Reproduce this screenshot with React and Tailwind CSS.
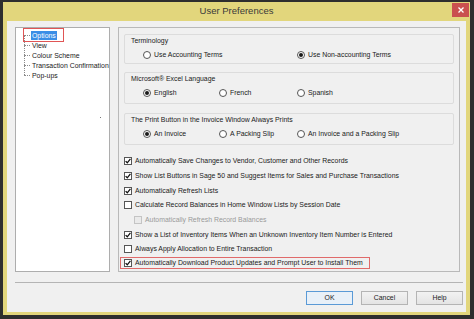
import React from 'react';

const font = { fontFamily: '"Liberation Sans", Arial, sans-serif' };

function Radio({ checked, label, className = '' }) {
  return (
    <div className={'flex items-center gap-[3px] whitespace-nowrap ' + className}>
      <span className="w-[8px] h-[8px] rounded-full border border-[#555] bg-white flex items-center justify-center">
        {checked && <span className="w-[4px] h-[4px] rounded-full bg-[#1a1a1a]" />}
      </span>
      <span>{label}</span>
    </div>
  );
}

function Check({ checked, label, disabled }) {
  return (
    <div className={'flex items-center gap-[3px] h-[14.7px] whitespace-nowrap ' + (disabled ? 'text-[#9a9a9a] pl-[10px]' : 'text-[#1a1a1a]')}>
      <span
        className={
          'w-[8px] h-[8px] border flex items-center justify-center ' +
          (disabled ? 'border-[#c4c4c4] bg-[#eaeaea]' : 'border-[#555] bg-white')
        }
      >
        {checked && (
          <svg width="6" height="6" viewBox="0 0 6 6">
            <path d="M0.6 3.1 L2.3 4.8 L5.4 0.9" fill="none" stroke="#111" strokeWidth="1.3" />
          </svg>
        )}
      </span>
      <span>{label}</span>
    </div>
  );
}

function Group({ title, className = '', children }) {
  return (
    <div className={'border border-[#dcdcdc] rounded-[2px] bg-[#f0f0f0] ' + className}>
      <div className="pl-[6px] pt-[1px] leading-[9px] whitespace-nowrap">{title}</div>
      {children}
    </div>
  );
}

function Button({ children, primary }) {
  return (
    <div
      className={
        'w-[47px] h-[14px] flex items-center justify-center border ' +
        (primary
          ? 'border-[#5a9ad6] bg-[#e8f0f8]'
          : 'border-[#b4b4b4] bg-gradient-to-b from-[#f2f2f2] to-[#e4e4e4]')
      }
    >
      {children}
    </div>
  );
}

const treeItems = ['View', 'Colour Scheme', 'Transaction Confirmation', 'Pop-ups'];

export default function App() {
  return (
    <div className="w-[474px] h-[319px] bg-[#2e2e2e] pt-[2px] pl-[3px] pr-[4px] pb-[4px] text-[6.9px] text-[#1a1a1a]" style={font}>
      <div className="w-full h-full bg-[#e2d67c] flex flex-col">
        <div className="relative h-[19px] flex items-center justify-center text-[9.5px] text-[#3a3a3a]">
          User Preferences
          <div className="absolute right-[1px] top-[1px] w-[17px] h-[14px] bg-[#c9504f] flex items-center justify-center">
            <svg width="6" height="6" viewBox="0 0 6 6">
              <path d="M0.5 0.5 L5.5 5.5 M5.5 0.5 L0.5 5.5" stroke="#fff" strokeWidth="1.3" />
            </svg>
          </div>
        </div>
        <div className="flex-1 mx-[4px] mb-[3px] bg-[#f0f0f0] flex flex-col pt-[6px] pl-[8px] pr-[3px]">
          <div className="flex gap-[8px] h-[245px]">
            {/* tree */}
            <div className="relative w-[95px] h-full bg-white border border-[#adadad] overflow-hidden">
              <div className="absolute left-[7px] top-[0px] w-[41px] h-[14px] border border-[#e05555]" />
              <div className="absolute left-[8px] top-[7px] h-[40px] border-l border-dotted border-[#8a8a8a]" />
              <div className="absolute left-[84px] top-[89px] w-[1px] h-[1px] bg-[#777]" />
              <div className="pl-[8px] pt-[2px] flex flex-col">
                <div className="h-[10px] flex items-center whitespace-nowrap">
                  <span className="w-[6px] border-t border-dotted border-[#8a8a8a]" />
                  <span className="ml-[1px] bg-[#3a8ee6] text-white px-[1px] leading-[9px]">Options</span>
                </div>
                {treeItems.map((t) => (
                  <div key={t} className="h-[10px] flex items-center whitespace-nowrap">
                    <span className="w-[6px] border-t border-dotted border-[#8a8a8a]" />
                    <span className="ml-[2px] leading-[9px]">{t}</span>
                  </div>
                ))}
              </div>
            </div>
            {/* options panel */}
            <div className="w-[342px] h-full border border-[#b9b9b9] px-[5px] pt-[6px] flex flex-col">
              <Group title="Terminology" className="h-[30px]">
                <div className="flex pl-[18px] mt-[5px]">
                  <Radio label="Use Accounting Terms" className="w-[154px]" />
                  <Radio checked label="Use Non-accounting Terms" />
                </div>
              </Group>
              <Group title="Microsoft® Excel Language" className="h-[32px] mt-[8px]">
                <div className="flex pl-[18px] mt-[5px]">
                  <Radio checked label="English" className="w-[76px]" />
                  <Radio label="French" className="w-[78px]" />
                  <Radio label="Spanish" />
                </div>
              </Group>
              <Group title="The Print Button in the Invoice Window Always Prints" className="h-[32px] mt-[9px]">
                <div className="flex pl-[18px] mt-[5px]">
                  <Radio checked label="An Invoice" className="w-[76px]" />
                  <Radio label="A Packing Slip" className="w-[78px]" />
                  <Radio label="An Invoice and a Packing Slip" />
                </div>
              </Group>
              <div className="mt-[9px] flex flex-col">
                <Check checked label="Automatically Save Changes to Vendor, Customer and Other Records" />
                <Check checked label="Show List Buttons in Sage 50 and Suggest Items for Sales and Purchase Transactions" />
                <Check checked label="Automatically Refresh Lists" />
                <Check label="Calculate Record Balances in Home Window Lists by Session Date" />
                <Check disabled label="Automatically Refresh Record Balances" />
                <Check checked label="Show a List of Inventory Items When an Unknown Inventory Item Number is Entered" />
                <Check label="Always Apply Allocation to Entire Transaction" />
                <div className="-ml-[4px] pl-[3px] w-[250px] h-[12px] border border-[#e06a6a] flex items-center">
                  <Check checked label="Automatically Download Product Updates and Prompt User to Install Them" />
                </div>
              </div>
            </div>
          </div>
          <div className="mt-[10px] h-[1px] bg-[#b4b4b4]" />
          <div className="mt-[8px] flex justify-end gap-[8px]">
            <Button primary>OK</Button>
            <Button>Cancel</Button>
            <Button>Help</Button>
          </div>
        </div>
      </div>
    </div>
  );
}
